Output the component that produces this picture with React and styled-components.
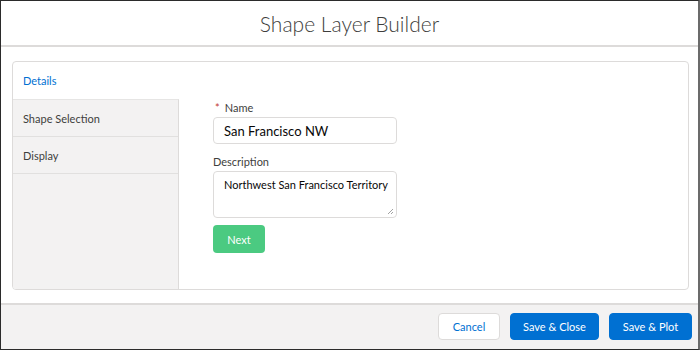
import React from 'react';
import styled, { createGlobalStyle } from 'styled-components';

const Global = createGlobalStyle`
  html, body { margin: 0; padding: 0; }
  body { font-family: Lato, "Open Sans", "Liberation Sans", sans-serif; color: #16325c; }
  * { box-sizing: border-box; }
`;

const Modal = styled.div`
  width: 700px;
  height: 350px;
  display: flex;
  flex-direction: column;
  border: 1px solid #2b2b2b;
  border-right: 2px solid #6b6b6b;
  background: #fff;
`;

const Header = styled.header`
  height: 46px;
  flex-shrink: 0;
  display: flex;
  align-items: center;
  justify-content: center;
  border-bottom: 2px solid #dddbda;
  font-size: 21px;
  font-weight: 300;
  color: #3e3e3c;
`;

const Body = styled.main`
  flex: 1;
  padding: 14px 9px 13px 11px;
  display: flex;
`;

const Card = styled.section`
  flex: 1;
  display: flex;
  flex-direction: column;
  border: 1px solid #dddbda;
  border-radius: 4px;
  overflow: hidden;
`;

const TopTab = styled.div`
  height: 37px;
  flex-shrink: 0;
  display: flex;
  align-items: center;
  padding-left: 10px;
  font-size: 11px;
  color: #0070d2;
`;

const Split = styled.div`
  flex: 1;
  display: flex;
`;

const Nav = styled.nav`
  width: 166px;
  background: #f3f2f2;
  border-right: 1px solid #dddbda;
  border-top: 1px solid #e6e5e4;
`;

const NavItem = styled.div`
  height: 37px;
  display: flex;
  align-items: center;
  padding-left: 10px;
  font-size: 11px;
  color: #3e3e3c;
  border-bottom: 1px solid #e1e0df;
`;

const Content = styled.div`
  flex: 1;
  padding: 2px 34px 0;
  display: flex;
  flex-direction: column;
`;

const Label = styled.label`
  font-size: 11px;
  line-height: 14px;
  color: #3e3e3c;
  margin-bottom: 2px;
  display: block;
  margin-top: ${p => p.$top || 0}px;
  span { color: #c23934; margin: 0 5px 0 2px; }
`;

const Input = styled.div`
  width: 184px;
  height: 27px;
  border: 1px solid #dddbda;
  border-radius: 4px;
  display: flex;
  align-items: center;
  padding-left: 10px;
  font-size: 13px;
  color: #080707;
`;

const TextArea = styled.div`
  position: relative;
  width: 184px;
  height: 47px;
  border: 1px solid #dddbda;
  border-radius: 4px;
  padding: 6px 0 0 10px;
  font-size: 11px;
  color: #080707;
  margin-bottom: 7px;
  white-space: nowrap;
`;

const Grip = styled.svg`
  position: absolute;
  right: 2px;
  bottom: 2px;
`;

const Next = styled.button`
  width: 52px;
  height: 28px;
  border: none;
  border-radius: 4px;
  background: #4bca81;
  color: #fff;
  font-family: inherit;
  font-size: 11px;
`;

const Footer = styled.footer`
  height: 46px;
  flex-shrink: 0;
  background: #f3f2f2;
  border-top: 2px solid #dddbda;
  display: flex;
  align-items: center;
  justify-content: flex-end;
  gap: 10px;
  padding: 0 6px 1px 0;
`;

const Btn = styled.button`
  height: 27px;
  width: ${p => p.$w}px;
  border-radius: 4px;
  font-family: inherit;
  font-size: 11px;
  border: 1px solid ${p => (p.$brand ? '#0070d2' : '#dddbda')};
  background: ${p => (p.$brand ? '#0070d2' : '#fff')};
  color: ${p => (p.$brand ? '#fff' : '#0070d2')};
`;

export default function App() {
  return (
    <>
      <Global />
      <Modal>
        <Header>Shape Layer Builder</Header>
        <Body>
          <Card>
            <TopTab>Details</TopTab>
            <Split>
              <Nav>
                <NavItem>Shape Selection</NavItem>
                <NavItem>Display</NavItem>
              </Nav>
              <Content>
                <Label><span>*</span>Name</Label>
                <Input>San Francisco NW</Input>
                <Label $top={11}>Description</Label>
                <TextArea>
                  Northwest San Francisco Territory
                  <Grip width="7" height="7" viewBox="0 0 7 7">
                    <path d="M6 1L1 6M6 4L4 6" stroke="#8a8a8a" strokeWidth="0.8" />
                  </Grip>
                </TextArea>
                <div><Next>Next</Next></div>
              </Content>
            </Split>
          </Card>
        </Body>
        <Footer>
          <Btn $w={62}>Cancel</Btn>
          <Btn $brand $w={89}>Save &amp; Close</Btn>
          <Btn $brand $w={83}>Save &amp; Plot</Btn>
        </Footer>
      </Modal>
    </>
  );
}
